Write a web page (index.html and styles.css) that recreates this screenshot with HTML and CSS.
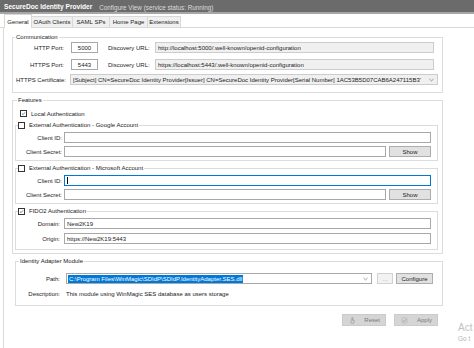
FILE: index.html
```html
<!DOCTYPE html>
<html>
<head>
<meta charset="utf-8">
<link rel="stylesheet" href="styles.css">
</head>
<body>
<div class="titlebar"><span class="app">SecureDoc Identity Provider</span><span class="sub">Configure View (service status: Running)</span></div>
<div class="tabs">
  <div class="tab active t-general">General</div>
  <div class="tab t-oauth">OAuth Clients</div>
  <div class="tab t-saml">SAML SPs</div>
  <div class="tab t-home">Home Page</div>
  <div class="tab t-ext">Extensions</div>
</div>
<div class="panel">
  <fieldset class="group comm">
    <legend>Communication</legend>
    <div class="row">
      <span class="lbl port-lbl">HTTP Port:</span>
      <div class="box port">5000</div>
      <span class="lbl disc-lbl">Discovery URL:</span>
      <div class="box ro grow">http://localhost:5000/.well-known/openid-configuration</div>
    </div>
    <div class="row r2">
      <span class="lbl port-lbl">HTTPS Port:</span>
      <div class="box port">5443</div>
      <span class="lbl disc-lbl">Discovery URL:</span>
      <div class="box ro grow">https://localhost:5443/.well-known/openid-configuration</div>
    </div>
    <div class="row r3">
      <span class="lbl cert-lbl">HTTPS Certificate:</span>
      <div class="box ro grow combo cert"><span class="combo-text">[Subject] CN=SecureDoc Identity Provider[Issuer] CN=SecureDoc Identity Provider[Serial Number] 1AC53B5D07CAB6A247115B3'</span><svg class="chev" viewBox="0 0 6 4"><path d="M0.6 0.8 L3 3.1 L5.4 0.8" fill="none" stroke="#555" stroke-width="0.7"/></svg></div>
    </div>
  </fieldset>

  <fieldset class="group feat">
    <legend>Features</legend>
    <div class="cbrow local">
      <span class="cb"><svg viewBox="0 0 7 7"><path d="M1.4 3.7 L2.9 5.1 L5.7 1.9" fill="none" stroke="#222" stroke-width="0.8"/></svg></span>
      <span>Local Authentication</span>
    </div>

    <fieldset class="sub google">
      <legend class="cblegend"><span class="cb"></span><span>External Authentication - Google Account</span></legend>
      <div class="row">
        <span class="lbl sub-lbl">Client ID:</span>
        <div class="box grow"></div>
      </div>
      <div class="row r-next">
        <span class="lbl sub-lbl">Client Secret:</span>
        <div class="box grow"></div>
        <div class="btn show">Show</div>
      </div>
    </fieldset>

    <fieldset class="sub ms">
      <legend class="cblegend"><span class="cb"></span><span>External Authentication - Microsoft Account</span></legend>
      <div class="row">
        <span class="lbl sub-lbl">Client ID:</span>
        <div class="box grow focus"><span class="caret"></span></div>
      </div>
      <div class="row r-next">
        <span class="lbl sub-lbl">Client Secret:</span>
        <div class="box grow"></div>
        <div class="btn show">Show</div>
      </div>
    </fieldset>

    <fieldset class="sub fido">
      <legend class="cblegend"><span class="cb"><svg viewBox="0 0 7 7"><path d="M1.4 3.7 L2.9 5.1 L5.7 1.9" fill="none" stroke="#222" stroke-width="0.8"/></svg></span><span>FIDO2 Authentication</span></legend>
      <div class="row">
        <span class="lbl sub-lbl fido-lbl">Domain:</span>
        <div class="box grow">New2K19</div>
      </div>
      <div class="row r-fido">
        <span class="lbl sub-lbl fido-lbl">Origin:</span>
        <div class="box grow">https://New2K19:5443</div>
      </div>
    </fieldset>
  </fieldset>

  <fieldset class="group idm">
    <legend>Identity Adapter Module</legend>
    <div class="row path-row">
      <span class="lbl idm-lbl">Path:</span>
      <div class="box grow combo pathbox"><span class="sel">C:\Program Files\WinMagic\SDIdP\SDIdP.IdentityAdapter.SES.dll</span><svg class="chev" viewBox="0 0 6 4"><path d="M0.6 0.8 L3 3.1 L5.4 0.8" fill="none" stroke="#555" stroke-width="0.7"/></svg></div>
      <div class="btn dots">...</div>
      <div class="btn configure">Configure</div>
    </div>
    <div class="row desc-row">
      <span class="lbl idm-lbl">Description:</span>
      <span class="desc">This module using WinMagic SES database as users storage</span>
    </div>
  </fieldset>

  <div class="actions">
    <div class="btn big reset">
      <svg class="ico" viewBox="0 0 8 8"><path d="M2.2 4.2 V6.2 Q2.2 7.4 4 7.4 Q5.8 7.4 5.8 6 V3.8 M3.3 4.4 V1.2 Q3.3 0.6 3.8 0.6 Q4.3 0.6 4.3 1.2 V4 M4.3 3.4 Q5.8 3.2 5.8 3.8" fill="none" stroke="#8a8a8a" stroke-width="0.7"/></svg>
      <span>Reset</span>
    </div>
    <div class="btn big apply">
      <svg class="ico" viewBox="0 0 8 8"><circle cx="4" cy="4" r="3.3" fill="none" stroke="#a0a0a0" stroke-width="0.5"/><path d="M2.2 4.1 L3.5 5.3 L5.9 2.6" fill="none" stroke="#8a8a8a" stroke-width="0.8"/></svg>
      <span>Apply</span>
    </div>
  </div>
</div>

<div class="watermark">
  <div class="wm1">Act</div>
  <div class="wm2">Go t</div>
</div>
</body>
</html>
```

FILE: styles.css
```css
* { box-sizing: border-box; }

html, body {
  margin: 0;
  padding: 0;
}

body {
  width: 474px;
  height: 348px;
  overflow: hidden;
  position: relative;
  background: #ffffff;
  font-family: "Liberation Sans", Arial, sans-serif;
  font-size: 6px;
  color: #222;
}

/* Title bar */
.titlebar {
  height: 14px;
  background: #6b6b6b;
  border-bottom: 2px solid #a6a6a6;
  display: flex;
  align-items: center;
  padding-left: 4px;
  gap: 7px;
  white-space: nowrap;
}
.titlebar .app {
  color: #ffffff;
  font-weight: bold;
  font-size: 6.6px;
}
.titlebar .sub {
  color: #dcdcdc;
  font-size: 6.3px;
}

/* Tabs */
.tabs {
  height: 14px;
  display: flex;
  align-items: flex-end;
  padding-left: 4px;
  border-bottom: 1px solid #d9d9d9;
}
.tab {
  height: 12px;
  margin-bottom: -1px;
  background: #f0f0f0;
  border: 1px solid #d9d9d9;
  border-left: none;
  display: flex;
  align-items: center;
  justify-content: center;
  white-space: nowrap;
  color: #222;
}
.tab.active {
  height: 14px;
  background: #ffffff;
  border-left: 1px solid #d9d9d9;
  border-bottom: none;
}
.t-general { width: 28px; }
.t-oauth { width: 41px; }
.t-saml { width: 37px; }
.t-home { width: 38px; }
.t-ext { width: 33px; }

/* Panel */
.panel {
  margin-left: 3px;
  width: 440px;
  height: 320px;
  border-left: 1px solid #d9d9d9;
  padding: 5px 0 0 8px;
}

fieldset {
  margin: 0;
  border: 1px solid #dcdcdc;
  min-width: 0;
}
legend {
  line-height: 8px;
  padding: 0 1px;
  margin-left: 2px;
  white-space: nowrap;
}

.group { width: 431px; }

.comm {
  padding: 1px 8px 7px 0;
}
.feat {
  margin-top: 3px;
  padding: 0 4px 3px 2px;
}
.idm {
  margin-top: 3px;
  margin-left: 3px;
  width: 428px;
  padding: 8px 9px 6px 0;
}
.idm legend { margin-left: 3px; }

.row {
  display: flex;
  align-items: center;
  height: 11px;
}
.r2 { margin-top: 6px; }
.r3 { margin-top: 4px; }

.lbl {
  white-space: nowrap;
  flex: none;
}
.port-lbl {
  width: 51px;
  text-align: right;
  margin-right: 7px;
}
.disc-lbl {
  width: 47px;
  margin-left: 10px;
}
.cert-lbl {
  width: 54px;
  margin-left: 3px;
}

.box {
  height: 11px;
  border: 1px solid #a8a8a8;
  background: #ffffff;
  display: flex;
  align-items: center;
  padding: 0 2px;
  white-space: nowrap;
  overflow: hidden;
}
.box.ro {
  background: #f0f0f0;
  border-color: #cccccc;
}
.box.focus {
  border-color: #0078d7;
}
.grow { flex: 1; min-width: 0; }
.port {
  width: 27px;
  justify-content: center;
  flex: none;
}
.combo {
  position: relative;
  padding-right: 9px;
}
.combo-text {
  overflow: hidden;
  flex: 1;
  min-width: 0;
}
.cert { margin-right: -4px; }
.chev {
  position: absolute;
  right: 3px;
  top: 3px;
  width: 5px;
  height: 4px;
}

.caret {
  display: block;
  width: 1px;
  height: 7px;
  background: #000;
}

/* Checkboxes */
.cb {
  width: 7px;
  height: 7px;
  border: 1px solid #333;
  background: #fff;
  flex: none;
  display: inline-flex;
}
.cb svg {
  width: 5px;
  height: 5px;
}
.cbrow {
  display: flex;
  align-items: center;
  gap: 4px;
  height: 9px;
  margin-top: 5px;
  margin-left: 5px;
}
.cblegend {
  display: flex;
  align-items: center;
  gap: 4px;
  height: 9px;
  line-height: 9px;
  margin-left: 2px;
  padding: 0 1px 0 0;
}

/* Sub groups */
.sub {
  margin-top: 3px;
  width: 423px;
  padding: 2px 6px 3px 0;
}
.sub.fido { padding-bottom: 5px; }
.sub-lbl {
  width: 46px;
  text-align: right;
  margin-right: 2px;
}
.fido-lbl {
  width: 44px;
  margin-right: 4px;
}
.r-next { margin-top: 3px; }
.r-fido { margin-top: 4px; }

/* Buttons */
.btn {
  height: 11px;
  border: 1px solid #adadad;
  background: #e1e1e1;
  display: flex;
  align-items: center;
  justify-content: center;
  white-space: nowrap;
  flex: none;
  color: #222;
}
.show {
  width: 42px;
  margin-left: 3px;
}
.dots {
  width: 16px;
  margin-left: 5px;
  background: #f2f2f2;
  border-color: #d2d2d2;
  color: #a0a0a0;
}
.configure {
  width: 37px;
  margin-left: 3px;
}

/* Identity adapter */
.idm-lbl {
  width: 44px;
  text-align: right;
  margin-right: 6px;
}
.pathbox {
  border-color: #a8a8a8;
  padding-left: 1px;
}
.sel {
  background: #0078d7;
  color: #ffffff;
  line-height: 8px;
  padding: 0 1px;
}
.desc-row { margin-top: 5px; height: 10px; }
.desc { white-space: nowrap; }

/* Actions */
.actions {
  display: flex;
  justify-content: flex-end;
  gap: 8px;
  margin-top: 8px;
  padding-right: 5px;
  width: 431px;
}
.btn.big {
  width: 44px;
  height: 12px;
  background: #d5d5d5;
  border-color: #cbcbcb;
  color: #7a7a7a;
  justify-content: space-between;
  padding: 0 5px 0 6px;
}
.ico {
  width: 7px;
  height: 7px;
}
.apply { padding-left: 7px; padding-right: 4px; }

/* Watermark */
.watermark {
  position: absolute;
  left: 458px;
  top: 322px;
  white-space: nowrap;
  color: #c2c2c2;
}
.wm1 {
  font-size: 10px;
  line-height: 12px;
}
.wm2 {
  font-size: 6.5px;
  line-height: 8px;
  margin-top: 1px;
  color: #b5b5b5;
}
```
